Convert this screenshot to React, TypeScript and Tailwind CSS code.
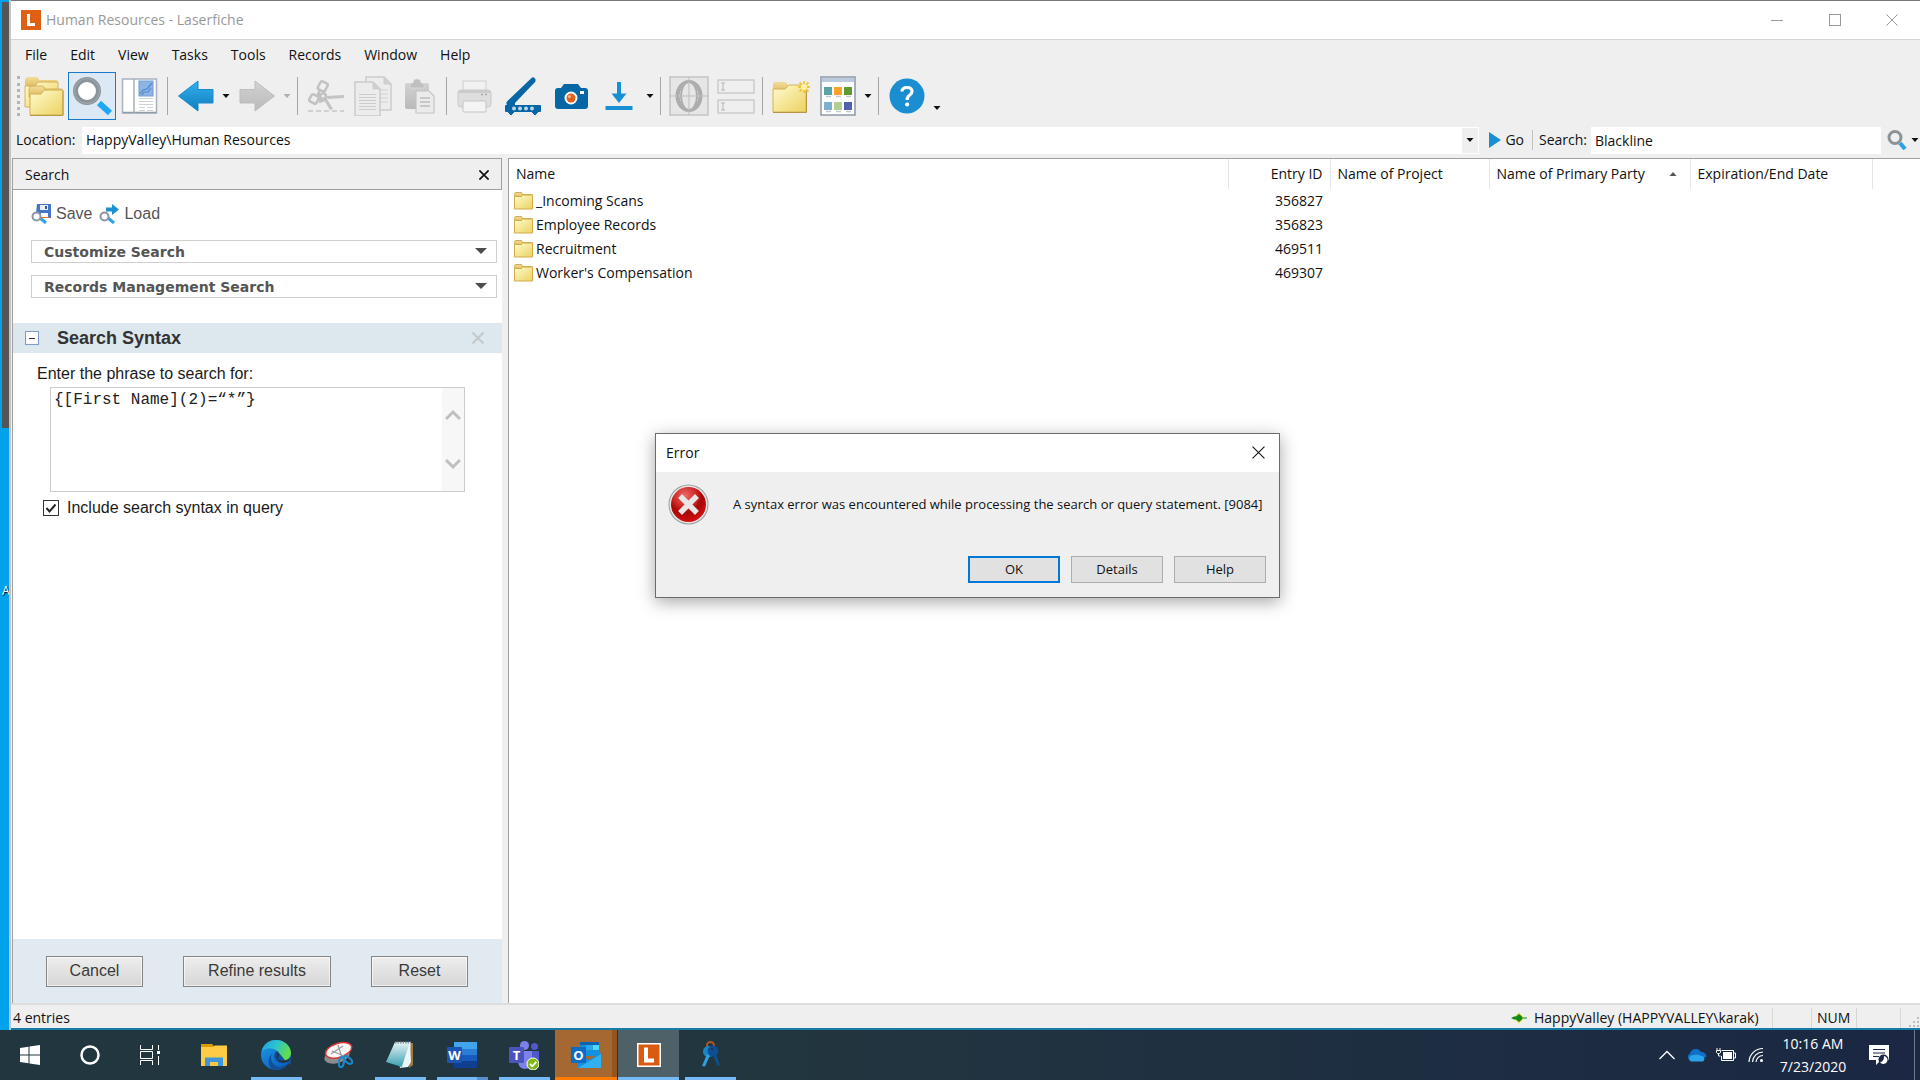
import type { ReactNode } from "react";
import { clsx } from "clsx";

const MENUS = ["File", "Edit", "View", "Tasks", "Tools", "Records", "Window", "Help"];

const ENTRIES = [
  { name: "_Incoming Scans", id: 356827 },
  { name: "Employee Records", id: 356823 },
  { name: "Recruitment", id: 469511 },
  { name: "Worker's Compensation", id: 469307 },
];

/* ---------- shared gradients ---------- */

function Gradients() {
  return (
    <svg className="absolute h-0 w-0" aria-hidden="true">
      <defs>
        <linearGradient id="folder" x1="0" y1="0" x2="1" y2="1">
          <stop offset="0" stopColor="#fffbd0" />
          <stop offset="1" stopColor="#ecd260" />
        </linearGradient>
        <linearGradient id="tab" x1="0" y1="0" x2="0" y2="1">
          <stop offset="0" stopColor="#f3dc9a" />
          <stop offset="1" stopColor="#dfba5c" />
        </linearGradient>
        <linearGradient id="blue" x1="0" y1="0" x2="0" y2="1">
          <stop offset="0" stopColor="#35b0ee" />
          <stop offset="1" stopColor="#0d7dbd" />
        </linearGradient>
        <linearGradient id="gray" x1="0" y1="0" x2="0" y2="1">
          <stop offset="0" stopColor="#d2d2d2" />
          <stop offset="1" stopColor="#bababa" />
        </linearGradient>
        <radialGradient id="error" cx="0.4" cy="0.25" r="0.8">
          <stop offset="0" stopColor="#ee6a66" />
          <stop offset="0.45" stopColor="#c8201f" />
          <stop offset="0.6" stopColor="#a60808" />
          <stop offset="1" stopColor="#e01010" />
        </radialGradient>
        <linearGradient id="edgeTop" x1="0" y1="0" x2="1" y2="0.4">
          <stop offset="0" stopColor="#1f9fdc" />
          <stop offset="0.5" stopColor="#2cc3d0" />
          <stop offset="1" stopColor="#63dd4c" />
        </linearGradient>
        <linearGradient id="edgeLow" x1="0" y1="0" x2="0.6" y2="1">
          <stop offset="0" stopColor="#1f9de6" />
          <stop offset="1" stopColor="#0c62c0" />
        </linearGradient>
        <linearGradient id="note" x1="0" y1="0" x2="0" y2="1">
          <stop offset="0" stopColor="#e6f4f6" />
          <stop offset="1" stopColor="#3aa0b0" />
        </linearGradient>
      </defs>
    </svg>
  );
}

/* ---------- small glyphs ---------- */

function Caret({ className }: { className?: string }) {
  return (
    <svg className={clsx("h-1 w-2 shrink-0", className)} viewBox="0 0 8 4" fill="currentColor">
      <path d="M0.5 0h7L4 4z" />
    </svg>
  );
}

function Cross({ className, width = 1 }: { className?: string; width?: number }) {
  return (
    <svg className={className} viewBox="0 0 12 12" stroke="currentColor" strokeWidth={width}>
      <path d="M0.5 0.5l11 11M11.5 0.5l-11 11" />
    </svg>
  );
}

function LaserficheLogo({ className }: { className?: string }) {
  return (
    <svg className={className} viewBox="0 0 20 20">
      <rect width="20" height="20" fill="#e06013" />
      <path d="M6 4h3v9h5v3H6z" fill="#fff" />
    </svg>
  );
}

function SmallFolder() {
  return (
    <svg className="h-[18px] w-[19px] shrink-0" viewBox="0 0 19 18">
      <path d="M0.5 2.5l1-2h6l1 2H18v3H0.5z" fill="url(#tab)" stroke="#d4ac4c" />
      <path d="M0.5 4.5h7l1-1.5H18.5v14h-18z" fill="url(#folder)" stroke="#d0ac48" />
    </svg>
  );
}

/* ---------- toolbar icons, all drawn on a 40px square ---------- */

function Icon({ children }: { children: ReactNode }) {
  return (
    <svg className="h-10 w-10 shrink-0" viewBox="0 0 40 40" fill="none">
      {children}
    </svg>
  );
}

function FoldersIcon() {
  return (
    <Icon>
      <path d="M1 4q0-2 2-3h9q3 0 3 3h17q2 0 2 2v5H1z" fill="url(#tab)" />
      <path d="M1 10h10l3-4h20v25H1z" fill="url(#folder)" stroke="#d4b45a" />
      <path d="M5 13q0-3 3-3h10q2 0 3 3h17v8H5z" fill="url(#tab)" stroke="#cfa94b" strokeWidth="0.8" />
      <path d="M6 18h11l3-4h19v25H6z" fill="url(#folder)" stroke="#cfae50" />
      <path d="M6 39.5h33V15" stroke="#b9974a" />
    </Icon>
  );
}

function MagnifierIcon() {
  return (
    <Icon>
      <path d="M27 27l11 10" stroke="#22a7f5" strokeWidth="6" />
      <circle cx="15" cy="15" r="11.5" fill="#fff" stroke="#8b949b" strokeWidth="5" />
      <circle cx="15" cy="15" r="12.5" stroke="#a3abb0" strokeWidth="1" />
    </Icon>
  );
}

function PreviewIcon() {
  return (
    <Icon>
      <rect x="2.5" y="3" width="34" height="34" fill="#fff" stroke="#a9b2be" strokeWidth="1.5" />
      <path d="M3 36.5h33.500" stroke="#8f9dab" strokeWidth="1.500" />
      <path d="M14 3v34" stroke="#a3aebb" strokeWidth="1.500" />
      <rect x="19" y="5" width="14" height="15" fill="#8db4e2" stroke="#6f9dd6" />
      <path d="M20 18l3-4 4-1 5-6M22 19l2-3h4l3-4" stroke="#4f88cf" strokeWidth="1.2" />
      <path d="M19 22.500h14M19 25.500h14M19 28.500h14M19 31.500h6M27 31.500h6M19 34.500h6M27 34.500h6" stroke="#cdd3db" />
    </Icon>
  );
}

function ArrowIcon({ fill, flipped = false }: { fill: string; flipped?: boolean }) {
  return (
    <Icon>
      <path
        d={flipped ? "M37.500 20L18 5v8.500H3v13.500h15V35z" : "M2.500 20L22 5v8.500h15v13.500H22V35z"}
        fill={fill}
        stroke={flipped ? "#bdbdbd" : "#168acb"}
      />
    </Icon>
  );
}

function CutIcon() {
  return (
    <Icon>
      <g stroke="#c2c2c2" strokeWidth="2.500">
        <rect x="13" y="6" width="8" height="9" rx="2" transform="rotate(28 17 10)" />
        <rect x="4" y="19" width="8" height="8" rx="2" transform="rotate(28 8 23)" />
        <path d="M14 14l-3 6M13 26l5-2M17 14l2 6" />
      </g>
      <rect x="12" y="17" width="9" height="8" rx="2" fill="#c2c2c2" />
      <circle cx="17" cy="20" r="1.500" fill="#efefef" />
      <path d="M20 20l18-1v3l-16 1zM18 24l3-1 6 10-3 1z" fill="#c4c4c4" />
      <path d="M2 35h36" stroke="#c6c6c6" strokeWidth="1.500" strokeDasharray="5 3" />
    </Icon>
  );
}

function CopyIcon() {
  return (
    <Icon>
      <path d="M13 1h18l7 7v26H13z" fill="#ececec" stroke="#cccccc" strokeWidth="1.500" />
      <path d="M31 1v7h7z" fill="#d0d0d0" stroke="#cccccc" />
      <path d="M27 14h8M27 18h8M27 22h8M27 26h8" stroke="#d0d0d0" />
      <path d="M2 6h18l7 7v27H2z" fill="#ececec" stroke="#cacaca" strokeWidth="1.500" />
      <path d="M20 6v7h7z" fill="#cfcfcf" stroke="#cccccc" />
      <path d="M6 18.500h17M6 21.500h17M6 24.500h17M6 27.500h17M6 30.500h17M6 33.500h17" stroke="#cccccc" />
    </Icon>
  );
}

function PasteIcon() {
  return (
    <Icon>
      <path d="M5 9q0-2 2-2h20q2 0 2 2v24H7q-2 0-2-2z" fill="url(#gray)" />
      <path d="M10 9q0-2 3-2 0-4 4-4t4 4q3 0 3 2v3H10z" fill="#c0c0c0" stroke="#dddddd" strokeWidth="0.700" />
      <path d="M16 15h13l5 5v17H16z" fill="#ebebeb" stroke="#c4c4c4" strokeWidth="1.200" />
      <path d="M20 22h10M20 26h10M20 30h10" stroke="#bdbdbd" strokeWidth="1.500" />
    </Icon>
  );
}

function PrintIcon() {
  return (
    <Icon>
      <rect x="8" y="5" width="23" height="12" fill="#f1f1f1" stroke="#cfcfcf" />
      <rect x="3" y="14" width="33" height="17" rx="3" fill="#dedede" stroke="#c9c9c9" />
      <path d="M3 17q0-3 3-3h27q3 0 3 3z" fill="#cbcbcb" />
      <path d="M26 18.500h2M30 18.500h2" stroke="#aaaaaa" strokeWidth="1.500" />
      <rect x="8" y="25" width="23" height="11" rx="1" fill="#f4f4f4" stroke="#c4c4c4" />
    </Icon>
  );
}

function ScanIcon() {
  return (
    <Icon>
      <path d="M4 28L30 3l2.500 2.500L12 27v3H3z" fill="#0766a6" />
      <path d="M6 27L30 4" stroke="#0766a6" strokeWidth="5" strokeLinecap="round" />
      <rect x="2" y="29" width="36" height="7" rx="1" fill="#0766a6" />
      <path d="M5 36h6l-3 3zM29 36h6l-3 3z" fill="#0766a6" stroke="#0766a6" />
      <g fill="#b9d6ea">
        <circle cx="11" cy="32.500" r="2" />
        <circle cx="17" cy="32.500" r="2" />
        <circle cx="23" cy="32.500" r="2" />
        <circle cx="29" cy="32.500" r="2" />
      </g>
    </Icon>
  );
}

function CameraIcon() {
  return (
    <Icon>
      <path d="M13 8h14l3 4h4q3 0 3 3v15q0 3-3 3H7q-3 0-3-3V15q0-3 3-3h3z" fill="#0766a6" />
      <circle cx="20" cy="22" r="6.500" fill="#fff" />
      <circle cx="20" cy="22" r="4.500" fill="#e0611b" />
      <circle cx="18.500" cy="20.500" r="1.500" fill="#f6b48c" />
      <rect x="29" y="15" width="4" height="3" fill="#fff" />
    </Icon>
  );
}

function ImportIcon() {
  return (
    <Icon>
      <path d="M20 6v14" stroke="#1690d2" strokeWidth="4" />
      <path d="M12.500 17.500h15L20 27z" fill="#1690d2" />
      <rect x="6.500" y="30" width="27" height="4" fill="#1690d2" />
    </Icon>
  );
}

function GlobeIcon() {
  return (
    <Icon>
      <rect x="1" y="1" width="38" height="38" fill="#e6e6e6" stroke="#c3c3c3" strokeWidth="1.500" />
      <ellipse cx="20" cy="20" rx="11.500" ry="14" stroke="#adadad" strokeWidth="4" />
      <ellipse cx="20" cy="20" rx="8" ry="14" fill="#e6e6e6" stroke="#adadad" strokeWidth="2" />
      <path d="M20 1v38M1 20h38" stroke="#bdbdbd" />
    </Icon>
  );
}

function FieldsIcon() {
  return (
    <Icon>
      <rect x="2" y="4" width="36" height="13" fill="#efefef" stroke="#cccccc" strokeWidth="1.500" />
      <rect x="2" y="24" width="36" height="13" fill="#efefef" stroke="#cccccc" strokeWidth="1.500" />
      <path d="M5 7h4M5 14h4M7 7v7M5 27h4M5 34h4M7 27v7" stroke="#b5b5b5" />
    </Icon>
  );
}

function NewFolderIcon() {
  return (
    <Icon>
      <path d="M2 8q0-2 3-2h8q3 0 4 3h17v8H2z" fill="url(#tab)" />
      <path d="M2 13h12l4-4h17v27H2z" fill="url(#folder)" stroke="#d4b257" />
      <path d="M2 36.500h33.500V12" stroke="#b89448" />
      <path d="M33 5v12M27 11h12M28.500 6.500l9 9M37.500 6.500l-9 9" stroke="#eec53b" strokeWidth="1.800" />
      <circle cx="33" cy="11" r="3" fill="#fff6ae" />
    </Icon>
  );
}

function TilesIcon() {
  return (
    <Icon>
      <rect x="3" y="1" width="34" height="38" fill="#fff" stroke="#8d98a8" strokeWidth="1.500" />
      <rect x="4" y="2" width="32" height="4" fill="#b9cbdd" />
      <rect x="6" y="11" width="8" height="8" fill="#5aa3a6" />
      <rect x="16" y="11" width="8" height="8" fill="#fba22f" />
      <rect x="26" y="11" width="8" height="8" fill="#5f9b30" />
      <rect x="6" y="26" width="8" height="8" fill="#7db0d0" />
      <rect x="16" y="26" width="8" height="8" fill="#b3ce95" />
      <rect x="26" y="26" width="8" height="8" fill="#5362ae" />
      <path d="M8 20.500h5M18 20.500h5M28 20.500h5M8 35.500h5M18 35.500h5M28 35.500h5" stroke="#c4c8cc" strokeWidth="1.500" />
    </Icon>
  );
}

function HelpIcon() {
  return (
    <Icon>
      <circle cx="20" cy="20" r="17.500" fill="#1a8ed0" />
      <path d="M15 15.500q0-4 5-4t5 4q0 2-2.500 3.800T20.200 24" stroke="#fff" strokeWidth="3.200" />
      <circle cx="20.200" cy="28.500" r="2.100" fill="#fff" />
    </Icon>
  );
}

function ToolButton({
  label,
  active = false,
  wide = false,
  children,
}: {
  label: string;
  active?: boolean;
  wide?: boolean;
  children: ReactNode;
}) {
  return (
    <button
      aria-label={label}
      className={clsx(
        "flex h-12 items-center justify-center border",
        active ? "border-[#1979ca] bg-[#dce9f5]" : "border-transparent",
        wide ? "w-12" : "w-[47px]"
      )}
    >
      {children}
    </button>
  );
}

function Separator() {
  return <span className="mr-1 ml-[3px] h-[38px] w-px bg-[#a5a5a5]" />;
}

/* ---------- window chrome ---------- */

function TitleBar() {
  return (
    <header className="flex h-10 shrink-0 items-center border-y border-t-[#777777] border-b-[#d6d6d6] bg-white pl-[10px]">
      <LaserficheLogo className="h-5 w-5" />
      <h1 className="ml-[5px] flex-1 text-[#999999]">Human Resources - Laserfiche</h1>
      <button aria-label="Minimize" className="flex h-full w-[58px] items-center justify-center">
        <span className="h-px w-3 bg-[#999999]" />
      </button>
      <button aria-label="Maximize" className="flex h-full w-[58px] items-center justify-center">
        <span className="h-3 w-3 border border-[#999999]" />
      </button>
      <button aria-label="Close" className="flex h-full w-14 items-center justify-center text-[#999999]">
        <Cross className="h-3 w-3" />
      </button>
    </header>
  );
}

function MenuBar() {
  return (
    <nav className="flex h-[30px] shrink-0 items-center gap-px pl-[3px]">
      {MENUS.map((menu) => (
        <button key={menu} className="px-[11px]">
          {menu}
        </button>
      ))}
    </nav>
  );
}

function Toolbar() {
  return (
    <div className="flex h-[52px] shrink-0 items-center pl-1.5">
      <span className="h-10 border-l-3 border-dotted border-[#b5b5b5]" />
      <ToolButton label="Browse" wide>
        <FoldersIcon />
      </ToolButton>
      <ToolButton label="Search" wide active>
        <MagnifierIcon />
      </ToolButton>
      <ToolButton label="Preview pane" wide>
        <PreviewIcon />
      </ToolButton>
      <Separator />
      <ToolButton label="Back">
        <ArrowIcon fill="url(#blue)" />
      </ToolButton>
      <Caret className="mx-[3px]" />
      <ToolButton label="Forward">
        <ArrowIcon fill="url(#gray)" flipped />
      </ToolButton>
      <Caret className="mx-[3px] text-[#b0b0b0]" />
      <Separator />
      <ToolButton label="Cut">
        <CutIcon />
      </ToolButton>
      <ToolButton label="Copy">
        <CopyIcon />
      </ToolButton>
      <ToolButton label="Paste">
        <PasteIcon />
      </ToolButton>
      <Separator />
      <ToolButton label="Print" wide>
        <PrintIcon />
      </ToolButton>
      <ToolButton label="Scan" wide>
        <ScanIcon />
      </ToolButton>
      <ToolButton label="Snapshot" wide>
        <CameraIcon />
      </ToolButton>
      <ToolButton label="Import" wide>
        <ImportIcon />
      </ToolButton>
      <Caret className="mx-[3px]" />
      <Separator />
      <ToolButton label="Web access">
        <GlobeIcon />
      </ToolButton>
      <ToolButton label="Fields">
        <FieldsIcon />
      </ToolButton>
      <Separator />
      <ToolButton label="New folder">
        <NewFolderIcon />
      </ToolButton>
      <ToolButton label="View mode">
        <TilesIcon />
      </ToolButton>
      <Caret className="mx-[3px]" />
      <Separator />
      <ToolButton label="Help">
        <HelpIcon />
      </ToolButton>
      <Caret className="mx-[3px] mt-6" />
    </div>
  );
}

function LocationBar() {
  return (
    <div className="flex h-9 shrink-0 items-center py-1 pl-[5px]">
      <label htmlFor="location" className="w-[66px]">
        Location:
      </label>
      <div className="flex h-[27px] flex-1 bg-white">
        <input id="location" defaultValue="HappyValley\Human Resources" className="min-w-0 flex-1 px-1 outline-none" />
        <button aria-label="Recent locations" className="m-px flex w-4 items-center justify-center bg-[#efefef]">
          <Caret />
        </button>
      </div>
      <button className="ml-2 flex items-center gap-1 px-0.5">
        <svg className="h-4 w-3" viewBox="0 0 12 16">
          <path d="M0 0l12 8-12 8z" fill="#1690d2" />
        </svg>
        Go
      </button>
      <span className="mx-1.5 h-5 w-px bg-[#c2c2c2]" />
      <label htmlFor="quick-search" className="w-[52px]">
        Search:
      </label>
      <input id="quick-search" defaultValue="Blackline" className="h-[27px] w-[290px] bg-white px-1 outline-none" />
      <button aria-label="Run search" className="ml-1.5 flex items-center gap-1 pr-px">
        <svg className="h-5 w-5" viewBox="0 0 20 20" fill="none">
          <path d="M13 13l5 6" stroke="#27a3ee" strokeWidth="4" />
          <circle cx="8" cy="7.500" r="6" stroke="#8c9398" strokeWidth="3" />
        </svg>
        <Caret />
      </button>
    </div>
  );
}

/* ---------- search pane ---------- */

function DropDown({ label }: { label: string }) {
  return (
    <div className="relative">
      <select
        aria-label={label}
        className="block h-[23px] w-full appearance-none border border-[#cfcfcf] bg-white pl-3 font-['DejaVu_Sans'] text-sm/5 font-bold text-[#555555]"
      >
        <option>{label}</option>
      </select>
      <svg className="pointer-events-none absolute top-2 right-[10px] h-1.5 w-3 text-[#4d4d4d]" viewBox="0 0 12 6" fill="currentColor">
        <path d="M0 0h12L6 6z" />
      </svg>
    </div>
  );
}

function SearchLens() {
  return (
    <>
      <path d="M9 14l6 5" stroke="#27a3ee" strokeWidth="3" />
      <circle cx="5.500" cy="12.500" r="4" fill="#fff" stroke="#8a96a3" strokeWidth="2" />
    </>
  );
}

function SaveLoad() {
  return (
    <div className="flex h-5 items-center gap-[7px] text-base text-[#555555]">
      <button className="flex items-center gap-[5px]">
        <svg className="h-5 w-5" viewBox="0 0 20 20" fill="none">
          <path d="M6 0h14v14H9L5 9z" fill="#4376c8" />
          <rect x="9" y="1" width="8" height="5" fill="#e8f0fb" />
          <rect x="14" y="2" width="2" height="3" fill="#35599a" />
          <rect x="10" y="9" width="7" height="4" fill="#fff" />
          <path d="M10 13.500h8" stroke="#e2762c" />
          <SearchLens />
        </svg>
        Save
      </button>
      <button className="flex items-center gap-[5px]">
        <svg className="h-5 w-5" viewBox="0 0 20 20" fill="none">
          <path d="M7 3.500h6V0l7 5.500-7 5.500V7.500H7z" fill="#1d90d0" />
          <SearchLens />
        </svg>
        Load
      </button>
    </div>
  );
}

function PaneButton({ children, className }: { children: ReactNode; className?: string }) {
  return (
    <button
      className={clsx(
        "h-[31px] border border-[#858585] bg-linear-to-b from-[#eeeeee] to-[#d6d6d6] text-base text-[#3a3a3a] ring-1 ring-white/60 ring-inset",
        className
      )}
    >
      {children}
    </button>
  );
}

function SearchPane() {
  return (
    <aside className="mr-1.5 ml-px flex w-[490px] shrink-0 flex-col border-l border-[#a0a0a0] bg-white">
      <div className="flex h-8 shrink-0 items-center justify-between border border-l-0 border-[#a0a0a0] bg-[#efefef] px-3 pt-0.5">
        <h2>Search</h2>
        <button aria-label="Close search pane">
          <Cross className="h-[10px] w-[10px]" width={2} />
        </button>
      </div>
      <div className="flex flex-1 flex-col font-['Liberation_Sans',sans-serif]">
        <div className="flex flex-col gap-3 pt-3.5 pb-3 pr-[5px] pl-[18px]">
          <SaveLoad />
          <div className="mt-1 flex flex-col gap-3">
            <DropDown label="Customize Search" />
            <DropDown label="Records Management Search" />
          </div>
        </div>
        <div className="mt-[13px] flex h-[30px] items-center bg-[#dce7ee] pr-[18px] pl-3">
          <button
            aria-label="Collapse"
            className="flex h-3.5 w-3.5 items-center justify-center border border-[#829bc4] bg-white"
          >
            <span className="h-px w-1.5 bg-[#333333]" />
          </button>
          <h3 className="ml-[18px] flex-1 text-lg font-bold text-[#333333]">Search Syntax</h3>
          <button aria-label="Remove" className="text-[#c4c8cb]">
            <Cross className="h-3 w-3" width={2} />
          </button>
        </div>
        <div className="flex flex-col pt-[9px] text-base text-[#1a1a1a]">
          <label htmlFor="phrase" className="pl-6">
            Enter the phrase to search for:
          </label>
          <div className="mx-[37px] mt-px flex h-[105px] border border-[#cccccc]">
            <textarea
              id="phrase"
              defaultValue="{[First Name](2)=“*”}"
              className="flex-1 resize-none overflow-hidden px-[3px] font-['Liberation_Mono',monospace] text-base/6 text-[#222222] outline-none"
            />
            <div className="flex w-[22px] flex-col items-center justify-between bg-[#f7f7f7] py-[21px]">
              <svg className="h-3 w-4" viewBox="0 0 16 12" fill="none" stroke="#bfbfbf" strokeWidth="3">
                <path d="M1 10l7-7 7 7" />
              </svg>
              <svg className="h-3 w-4" viewBox="0 0 16 12" fill="none" stroke="#bfbfbf" strokeWidth="3">
                <path d="M1 2l7 7 7-7" />
              </svg>
            </div>
          </div>
          <label className="mt-1 ml-[30px] flex items-center gap-2">
            <span className="relative flex h-4 w-4">
              <input type="checkbox" defaultChecked className="h-4 w-4 appearance-none border border-[#333333] bg-white" />
              <svg className="pointer-events-none absolute inset-0 h-4 w-4" viewBox="0 0 16 16" fill="none">
                <path d="M3.500 8l3 3.500 6-7" stroke="#222222" strokeWidth="2" />
              </svg>
            </span>
            Include search syntax in query
          </label>
        </div>
        <div className="mt-auto flex h-16 items-center bg-[#e1eaf0] pl-[33px]">
          <PaneButton className="w-[97px]">Cancel</PaneButton>
          <PaneButton className="mx-10 w-[148px]">Refine results</PaneButton>
          <PaneButton className="w-[97px]">Reset</PaneButton>
        </div>
      </div>
    </aside>
  );
}

/* ---------- entry list ---------- */

function EntryList() {
  return (
    <main className="min-w-0 flex-1 border-t border-l border-[#a0a0a0] bg-white">
      <table className="w-full table-fixed text-left">
        <colgroup>
          <col />
          <col className="w-[102px]" />
          <col className="w-[159px]" />
          <col className="w-[201px]" />
          <col className="w-[182px]" />
          <col className="w-[48px]" />
        </colgroup>
        <thead>
          <tr className="h-[30px] [&>th]:border-r [&>th]:border-[#e5e5e5] [&>th]:px-[7px] [&>th]:font-normal">
            <th>Name</th>
            <th className="text-right">Entry ID</th>
            <th>Name of Project</th>
            <th>
              <span className="flex items-center justify-between pr-1.5">
                Name of Primary Party
                <Caret className="rotate-180 text-[#555555]" />
              </span>
            </th>
            <th>Expiration/End Date</th>
            <td />
          </tr>
        </thead>
        <tbody>
          {ENTRIES.map((entry) => (
            <tr key={entry.id} className="h-6">
              <td className="pl-[5px]">
                <span className="flex items-center gap-[3px]">
                  <SmallFolder />
                  {entry.name}
                </span>
              </td>
              <td className="pr-[7px] text-right">{entry.id}</td>
              <td colSpan={4} />
            </tr>
          ))}
        </tbody>
      </table>
    </main>
  );
}

function StatusBar() {
  return (
    <footer className="flex h-[25px] shrink-0 items-center border-t-2 border-[#dddddd] pt-0.5 pl-0.5">
      <span className="flex-1">4 entries</span>
      <svg className="mr-[7px] h-3 w-4" viewBox="0 0 16 12">
        <path d="M2 6l6-5.500L13 6l-5 5.500z" fill="#e8e33a" />
        <path d="M0 6l3-1.500h2L8 2l3 2.500V5.500h5v1h-5v1L8 10 5 7.500H3z" fill="#118a1c" />
      </svg>
      <span className="w-[238px]">HappyValley (HAPPYVALLEY\karak)</span>
      <span className="h-5 w-[39px] border-l border-[#d7d7d7]" />
      <span className="flex h-5 w-[45px] items-center border-l border-[#d7d7d7] pl-[5px]">NUM</span>
      <span className="h-5 w-11 border-l border-[#d7d7d7]" />
      <span className="flex h-5 w-5 items-end justify-end border-l border-[#d7d7d7]">
        <svg className="h-3 w-3" viewBox="0 0 12 12" fill="#bdbdbd">
          <path d="M9 1h2v2H9zM5 5h2v2H5zM9 5h2v2H9zM1 9h2v2H1zM5 9h2v2H5zM9 9h2v2H9z" />
        </svg>
      </span>
    </footer>
  );
}

/* ---------- error dialog ---------- */

function ErrorDialog() {
  return (
    <div className="absolute inset-0 flex items-center justify-center pt-0.5 pl-1">
      <div
        role="alertdialog"
        aria-labelledby="error-title"
        className="flex h-[165px] w-[625px] flex-col border border-[#6b6b6b] bg-[#efefef] text-[13px] shadow-[0_4px_16px_rgba(0,0,0,0.35)]"
      >
        <div className="flex h-[38px] items-center justify-between bg-white pr-[14px] pl-[10px]">
          <h2 id="error-title" className="text-sm">
            Error
          </h2>
          <button aria-label="Close dialog">
            <Cross className="h-[13px] w-[13px]" />
          </button>
        </div>
        <div className="flex items-center gap-6 px-3 pt-3">
          <svg className="h-[41px] w-[41px] shrink-0" viewBox="0 0 41 41">
            <circle cx="20.500" cy="20.500" r="20" fill="#9d9d9d" />
            <circle cx="20.500" cy="20.500" r="19" fill="#e6e6e6" />
            <circle cx="20.500" cy="20.500" r="17.500" fill="url(#error)" />
            <path d="M14 14l13 13M27 14L14 27" stroke="#e9e6e6" strokeWidth="5.500" strokeLinecap="square" />
          </svg>
          <p className="whitespace-nowrap">
            A syntax error was encountered while processing the search or query statement. [9084]
          </p>
        </div>
        <div className="mt-auto flex justify-end gap-[11px] pr-[13px] pb-[14px]">
          <button className="h-[27px] w-[92px] border-2 border-[#0078d7] bg-[#e1e1e1]">OK</button>
          <button className="h-[27px] w-[92px] border border-[#adadad] bg-[#e1e1e1]">Details</button>
          <button className="h-[27px] w-[92px] border border-[#adadad] bg-[#e1e1e1]">Help</button>
        </div>
      </div>
    </div>
  );
}

/* ---------- taskbar ---------- */

function Task({
  label,
  running = false,
  tile,
  bar = "bg-[#76b9f8]",
  children,
}: {
  label: string;
  running?: boolean;
  tile?: string;
  bar?: string;
  children: ReactNode;
}) {
  return (
    <button aria-label={label} className={clsx("flex w-[62px] flex-col items-center", tile)}>
      <span className="flex flex-1 items-center pt-[3px]">
        <svg className="h-[30px] w-[30px]" viewBox="0 0 30 30" fill="none">
          {children}
        </svg>
      </span>
      <span className={clsx("h-[3px]", tile ? "w-full" : "w-[51px]", running && bar)} />
    </button>
  );
}

function SystemButton({ label, children }: { label: string; children: ReactNode }) {
  return (
    <button aria-label={label} className="flex w-[60px] items-center justify-center">
      <svg className="h-5 w-5" viewBox="0 0 20 20" fill="none">
        {children}
      </svg>
    </button>
  );
}

function Letter({ x, y, children }: { x: number; y: number; children: string }) {
  return (
    <text x={x} y={y} fill="#fff" fontSize="13" fontWeight="700" textAnchor="middle" fontFamily="Open Sans, sans-serif">
      {children}
    </text>
  );
}

function Taskbar() {
  return (
    <footer className="flex h-[50px] shrink-0 bg-linear-to-r from-[#22363f] from-40% to-[#1b2743] text-white">
      <SystemButton label="Start">
        <path d="M0 3l8.500-1.200v7.700H0zM9.500 1.600L20 0v9.500H9.500zM0 10.500h8.500v7.700L0 17zM9.500 10.500H20V20L9.500 18.400z" fill="#fff" />
      </SystemButton>
      <SystemButton label="Cortana">
        <circle cx="10" cy="10" r="8.500" stroke="#fff" strokeWidth="2.500" />
      </SystemButton>
      <SystemButton label="Task view">
        <path d="M0.500 0v4.500h12V0M0.500 20v-4.500h12V20M0.500 6.500h12v7H0.500zM18.500 0v5M18.500 11v9" stroke="#fff" />
        <rect x="17" y="6" width="3" height="3" fill="#fff" />
      </SystemButton>
      <span className="w-[3px]" />
      <Task label="File Explorer">
        <path d="M2 4h11l2 2h13v7H2z" fill="#dc9a00" />
        <path d="M2 7h12l2-1.500h12V26H2z" fill="#ffcb45" />
        <path d="M6 17.500h18V26h-5v-4h-8v4H6z" fill="#3e96dc" />
      </Task>
      <Task label="Microsoft Edge" running>
        <circle cx="15" cy="15" r="15" fill="url(#edgeLow)" />
        <path d="M0.500 12C2 4 8 0 15 0c9 0 15 6.500 15 13 0 5-4 7.500-8 7.500-4 0-6-1.500-5-3 1.500-2 1-5-1.500-7C11 7 3.500 8 0.500 12z" fill="url(#edgeTop)" />
        <path d="M12 13c-4 4-2 12 5 13.500 5 1 9-1.500 11-4.500-3 6-8 8.500-14 8C6 28.500 6 17 12 13z" fill="#124f97" />
        <path d="M16 10.500q-4 3-2.500 7.500 2.500 6 10 5 3-0.500 5.500-3L31 22l-3 3" fill="#124f97" />
        <path d="M16.500 12q2.500 3 0.500 5.500c-1 1.500 1 3 5 3 3 0 6-1 7.500-3.500L28 21q-4 2.500-8 1.500c-4-1-5.500-7-3.500-10.500z" fill="#22363f" />
      </Task>
      <Task label="Snipping Tool">
        <ellipse cx="14" cy="16" rx="13" ry="7" fill="#8c8c8c" transform="rotate(-16 14 16)" />
        <ellipse cx="15.500" cy="10.500" rx="13.500" ry="7" fill="#f7f7f7" stroke="#dc3434" strokeWidth="1.500" transform="rotate(-18 15 10)" />
        <path d="M9 11l12 5M15 5l4 13M8 14l12-8" stroke="#9b9b9b" strokeWidth="1.200" />
        <ellipse cx="18.500" cy="22" rx="2.500" ry="5" stroke="#1a8bce" strokeWidth="2" transform="rotate(10 18 22)" />
        <ellipse cx="25" cy="20" rx="2.500" ry="5" stroke="#1a8bce" strokeWidth="2" transform="rotate(-50 25 20)" />
      </Task>
      <Task label="Notepad" running>
        <path d="M24 3h4v22l-4 3z" fill="#9c7a45" />
        <path d="M10 2h16l-3 25-8 1z" fill="#dbe9ec" />
        <path d="M10 2h15l-8 25L1 22z" fill="url(#note)" />
        <path d="M17 27l8-25 1 20-3 5z" fill="#eef5f6" />
        <path d="M10 2.500h16" stroke="#8a8f90" strokeWidth="2" strokeDasharray="1.500 1" />
      </Task>
      <Task label="Word" running bar="bg-linear-to-r from-[#76b9f8] from-78% to-[#5b8fc9] to-78%">
        <path d="M7 2h23v7H7z" fill="#41a5ee" />
        <path d="M7 9h23v6H7z" fill="#2b7cd3" />
        <path d="M7 15h23v6H7z" fill="#185abd" />
        <path d="M7 21h23v7H7z" fill="#103f91" />
        <rect y="7" width="15" height="16" rx="1" fill="#1c54b5" />
        <Letter x={7.5} y={20}>W</Letter>
      </Task>
      <Task label="Teams" running>
        <circle cx="15.500" cy="5.500" r="4.500" fill="#7b83eb" />
        <circle cx="25.500" cy="6.500" r="3.500" fill="#5059c9" />
        <path d="M20 11h10v9q-2 6-8 5z" fill="#5059c9" />
        <path d="M9 11h14v11q-1 7-7 7t-7-7z" fill="#7b83eb" />
        <rect y="7" width="15" height="16" rx="1" fill="#4b53bc" />
        <Letter x={7.5} y={20}>T</Letter>
        <circle cx="24" cy="24" r="6" fill="#82b816" stroke="#fff" strokeWidth="1" />
        <path d="M21 24l2.300 2.300 4-4.500" stroke="#fff" strokeWidth="1.800" />
      </Task>
      <Task
        label="Outlook"
        running
        tile="bg-linear-to-r from-[#a66832] from-92% to-[#97551e] to-92%"
        bar="bg-[#ff7a00]"
      >
        <path d="M9 2h19v14H9z" fill="#1490df" />
        <path d="M15 4h7v6h-7z" fill="#28a8ea" />
        <path d="M22 4h6v6h-6z" fill="#50d9ff" />
        <path d="M9 2h19v3H9z" fill="#0a64b4" />
        <path d="M7 14l11 6 12-7v15H7z" fill="#1a8fe0" />
        <path d="M7 28l23-14v14z" fill="#31b0f2" />
        <rect y="7" width="15" height="16" rx="1" fill="#0a6cc4" />
        <Letter x={7.5} y={20}>O</Letter>
      </Task>
      <Task label="Laserfiche" running tile="bg-[#4e6068] border-l border-[#22363f]">
        <rect x="3" y="3" width="24" height="24" fill="#fff" />
        <rect x="4.500" y="4.500" width="21" height="21" fill="#d95b12" />
        <path d="M10 7.500h4v11h6v4H10z" fill="#fff" />
      </Task>
      <Task label="Keys" running>
        <circle cx="15.500" cy="5.500" r="3.500" stroke="#b2542a" strokeWidth="2" />
        <circle cx="13.500" cy="11.500" r="5.500" fill="#1b86c5" />
        <path d="M12 14l-5 12 3 0.500 5-11z" fill="#2f9fdd" />
        <circle cx="18" cy="11" r="5.500" fill="#0d4f91" />
        <path d="M17 13l3-1 5 13-2.500 1z" fill="#0d4f91" />
        <circle cx="17" cy="9" r="1.200" fill="#22363f" />
      </Task>

      <div className="ml-auto flex items-center">
        <button aria-label="Show hidden icons" className="w-7">
          <svg className="h-[10px] w-4" viewBox="0 0 16 10" fill="none" stroke="#fff" strokeWidth="1.300">
            <path d="M0.500 9L8 1.500 15.500 9" />
          </svg>
        </button>
        <svg className="h-[14px] w-5" viewBox="0 0 20 14">
          <path d="M4 13a4 4 0 01-1-7.500A6 6 0 0114 4a5 5 0 015.500 5z" fill="#0f6fc6" />
          <path d="M4 13.500a3.500 3.500 0 010-6l6-1 5 1.500a3 3 0 011 5.500z" fill="#29a3ea" />
        </svg>
        <svg className="ml-[9px] h-[14px] w-5" viewBox="0 0 20 14" fill="none" stroke="#fff">
          <path d="M5.500 2.500h12v10h-12V8" />
          <path d="M18 5h1.500v5H18" />
          <rect x="7" y="4" width="9" height="7" fill="#fff" stroke="none" />
          <path d="M1 0v2M4 0v2M0.500 2.500h4v2l-1 1h-2l-1-1zM2.500 6v2h2" />
        </svg>
        <svg className="ml-3 h-4 w-4" viewBox="0 0 16 16" fill="none" stroke="#fff" strokeWidth="1.200">
          <path d="M1 15A14 14 0 0115 1.500M4.500 15A10.500 10.500 0 0115 5M8 15a7 7 0 017-6.500" />
          <circle cx="13.500" cy="13.500" r="1.500" fill="#fff" stroke="none" />
        </svg>
        <time className="ml-[11px] w-[76px] text-center leading-[23px]">
          10:16 AM
          <br />
          7/23/2020
        </time>
        <button aria-label="Notifications" className="ml-[18px]">
          <svg className="block h-5 w-5" viewBox="0 0 20 20">
            <path d="M0 0h20v15h-8l-5 5v-5H0z" fill="#fff" />
            <path d="M4 4.500h12M4 8h12M4 11.500h6" stroke="#1b2743" />
            <circle cx="14.500" cy="14.500" r="5" fill="#1b2743" />
            <path d="M15 11a4 4 0 11-4 6q4 0 4-6z" fill="#fff" />
          </svg>
        </button>
        <span className="mr-[5px] ml-[25px] h-[50px] w-px bg-[#6f7889]" />
      </div>
    </footer>
  );
}

export default function App() {
  return (
    <div className="flex h-screen flex-col overflow-hidden bg-[#00a2ed] font-['Open_Sans',sans-serif] text-sm text-[#111111]">
      <Gradients />
      <div className="flex min-h-0 flex-1">
        {/* sliver of desktop left of the window */}
        <div className="flex w-[11px] shrink-0 flex-col overflow-hidden border-r-2 border-[#c4c4c4] pt-0.5 pl-0.5">
          <span className="h-[426px] w-[7px] bg-[#555555]" />
          <span className="mt-[155px] text-xs text-white text-shadow-[1px_1px_1px_#000000]">A</span>
        </div>
        <div className="relative flex min-w-0 flex-1 flex-col border-b-2 border-b-[#167ba5] bg-[#efefef]">
          <TitleBar />
          <MenuBar />
          <Toolbar />
          <LocationBar />
          <div className="flex min-h-0 flex-1">
            <SearchPane />
            <EntryList />
          </div>
          <StatusBar />
          <ErrorDialog />
        </div>
      </div>
      <Taskbar />
    </div>
  );
}
